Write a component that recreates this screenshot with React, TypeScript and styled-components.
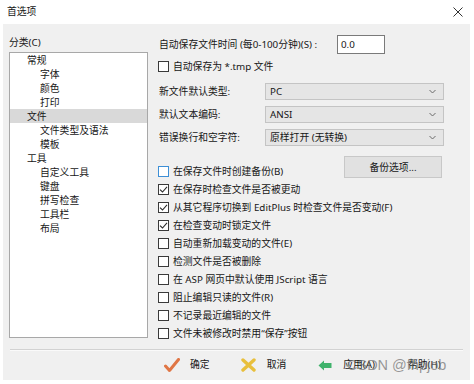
import React from "react"
import styled, { createGlobalStyle } from "styled-components"

const GlobalStyle = createGlobalStyle`
  html, body {
    margin: 0;
    padding: 0;
    background: #fff;
  }
  body {
    font-family: "Noto Sans", "Noto Sans CJK SC", sans-serif;
    font-size: 9.8px;
    color: #161616;
  }
`

const Window = styled.div`
  width: 474px;
  height: 384px;
  display: flex;
  flex-direction: column;
  background: #fff;
`

const TitleBar = styled.div`
  height: 24px;
  display: flex;
  align-items: center;
  justify-content: space-between;
  padding: 0 11px 0 7px;
  box-sizing: border-box;
`

const Title = styled.span`
  line-height: 14px;
`

const Body = styled.div`
  margin: 0 4px 0 3px;
  height: 356px;
  background: #f0f0f0;
  display: flex;
  flex-direction: column;
`

const Main = styled.div`
  height: 324px;
  display: flex;
  gap: 11px;
  padding-left: 6px;
`

const LeftCol = styled.div`
  width: 139px;
  padding-top: 12px;
  display: flex;
  flex-direction: column;
`

const Label = styled.div<{ $w?: number }>`
  line-height: 14px;
  white-space: nowrap;
  ${(p) => (p.$w ? `width: ${p.$w}px; flex-shrink: 0;` : "")}
`

const TreeBox = styled.div`
  margin-top: 2px;
  height: 286px;
  border: 1px solid #a8a8a8;
  background: #fff;
  box-sizing: border-box;
`

const TreeItem = styled.div<{ $level: number; $selected?: boolean }>`
  height: 14px;
  line-height: 15px;
  padding-left: ${(p) => 17 + p.$level * 13}px;
  background: ${(p) => (p.$selected ? "#d9d9d9" : "transparent")};
`

const RightCol = styled.div`
  width: 285px;
  padding-top: 11px;
  display: flex;
  flex-direction: column;
`

const Row = styled.div<{ $mt?: number }>`
  display: flex;
  align-items: center;
  margin-top: ${(p) => p.$mt ?? 0}px;
`

const TextInput = styled.div`
  width: 48px;
  height: 19px;
  box-sizing: border-box;
  border: 1px solid #7a7a7a;
  background: #fff;
  padding-left: 3px;
  line-height: 17px;
`

const Select = styled.div`
  width: 179px;
  height: 17px;
  box-sizing: border-box;
  border: 1px solid #c4c4c4;
  background: #e5e5e5;
  display: flex;
  align-items: center;
  justify-content: space-between;
  padding: 0 7px 0 4px;
  line-height: 15px;
`

const CheckRow = styled.div`
  height: 18px;
  display: flex;
  align-items: center;
  gap: 4px;
  margin-left: -1px;
  white-space: nowrap;
`

const Box = styled.span<{ $focus?: boolean }>`
  width: 11px;
  height: 11px;
  box-sizing: border-box;
  border: 1px solid ${(p) => (p.$focus ? "#3d8fd6" : "#3a3a3a")};
  background: #fff;
  display: inline-flex;
  align-items: center;
  justify-content: center;
  flex-shrink: 0;
`

const ButtonRow = styled.div`
  display: flex;
  align-items: flex-end;
  justify-content: space-between;
  margin-top: 10px;
`

const PushButton = styled.div`
  width: 98px;
  height: 22px;
  box-sizing: border-box;
  border: 1px solid #c8c8c8;
  background: #e1e1e1;
  display: flex;
  align-items: center;
  justify-content: center;
  margin: 0 2px 2px 0;
`

const Separator = styled.div`
  height: 1px;
  margin: 1px 7px 0 7px;
  background: #d2d2d2;
  box-shadow: 0 1px 0 #fafafa;
`

const Footer = styled.div`
  position: relative;
  flex: 1;
  display: flex;
  align-items: center;
  padding-left: 160px;
`

const FooterButton = styled.div<{ $indent?: number }>`
  width: 79px;
  display: flex;
  align-items: center;
  gap: 10px;
  line-height: 14px;
  padding-left: ${(p) => p.$indent ?? 0}px;
  box-sizing: border-box;
`

const IconSlot = styled.span`
  width: 17px;
  height: 16px;
  display: inline-flex;
  align-items: center;
  justify-content: center;
`

const Watermark = styled.div`
  position: absolute;
  left: 344px;
  top: 7px;
  font-family: "Liberation Sans", sans-serif;
  font-size: 14.5px;
  line-height: 16px;
  color: rgba(110, 110, 110, 0.7);
  pointer-events: none;
`

const tree = [
  { label: "常规", level: 0 },
  { label: "字体", level: 1 },
  { label: "颜色", level: 1 },
  { label: "打印", level: 1 },
  { label: "文件", level: 0, selected: true },
  { label: "文件类型及语法", level: 1 },
  { label: "模板", level: 1 },
  { label: "工具", level: 0 },
  { label: "自定义工具", level: 1 },
  { label: "键盘", level: 1 },
  { label: "拼写检查", level: 1 },
  { label: "工具栏", level: 1 },
  { label: "布局", level: 1 },
]

const checks = [
  { label: "在保存时检查文件是否被更动", on: true },
  { label: "从其它程序切换到 EditPlus 时检查文件是否变动(F)", on: true },
  { label: "在检查变动时锁定文件", on: true },
  { label: "自动重新加载变动的文件(E)", on: false },
  { label: "检测文件是否被删除", on: false },
  { label: "在 ASP 网页中默认使用 JScript 语言", on: false },
  { label: "阻止编辑只读的文件(R)", on: false },
  { label: "不记录最近编辑的文件", on: false },
  { label: "文件未被修改时禁用“保存”按钮", on: false },
]

const Tick = () => (
  <svg width="9" height="9" viewBox="0 0 9 9">
    <path d="M1 4.6 L3.5 7 L8 1.8" fill="none" stroke="#2b2b2b" strokeWidth="1.1" />
  </svg>
)

const Chevron = () => (
  <svg width="7" height="5" viewBox="0 0 7 5">
    <path d="M0.5 1 L3.5 4 L6.5 1" fill="none" stroke="#6a6a6a" strokeWidth="1" />
  </svg>
)

const Check = ({ on, focus, label }: { on?: boolean; focus?: boolean; label: string }) => (
  <CheckRow>
    <Box $focus={focus}>{on && <Tick />}</Box>
    <span>{label}</span>
  </CheckRow>
)

const SelectRow = ({ label, value, mt }: { label: string; value: string; mt: number }) => (
  <Row $mt={mt}>
    <Label $w={106}>{label}</Label>
    <Select>
      <span>{value}</span>
      <Chevron />
    </Select>
  </Row>
)

export default function App() {
  return (
    <>
      <GlobalStyle />
      <Window>
        <TitleBar>
          <Title>首选项</Title>
          <svg width="10" height="10" viewBox="0 0 10 10">
            <path d="M0.5 0.5 L9.5 9.5 M9.5 0.5 L0.5 9.5" stroke="#333" strokeWidth="1" />
          </svg>
        </TitleBar>
        <Body>
          <Main>
            <LeftCol>
              <Label>分类(C)</Label>
              <TreeBox>
                {tree.map((t) => (
                  <TreeItem key={t.label} $level={t.level} $selected={t.selected}>
                    {t.label}
                  </TreeItem>
                ))}
              </TreeBox>
            </LeftCol>
            <RightCol>
              <Row>
                <Label $w={178}>自动保存文件时间 (每0-100分钟)(S) :</Label>
                <TextInput>0.0</TextInput>
              </Row>
              <Row $mt={3}>
                <Check label="自动保存为 *.tmp 文件" />
              </Row>
              <SelectRow label="新文件默认类型:" value="PC" mt={8} />
              <SelectRow label="默认文本编码:" value="ANSI" mt={6} />
              <SelectRow label="错误换行和空字符:" value="原样打开 (无转换)" mt={6} />
              <ButtonRow>
                <Check focus label="在保存文件时创建备份(B)" />
                <PushButton>备份选项...</PushButton>
              </ButtonRow>
              {checks.map((c) => (
                <Check key={c.label} on={c.on} label={c.label} />
              ))}
            </RightCol>
          </Main>
          <Separator />
          <Footer>
            <FooterButton>
              <IconSlot>
                <svg width="16" height="15" viewBox="0 0 16 15">
                  <path d="M1.5 8 L5.5 12.5 L14.5 1.5" fill="none" stroke="#e07645" strokeWidth="3" strokeLinecap="round" strokeLinejoin="round" />
                </svg>
              </IconSlot>
              <span>确定</span>
            </FooterButton>
            <FooterButton>
              <IconSlot>
                <svg width="15" height="14" viewBox="0 0 15 14">
                  <path d="M2 2 L13 12 M13 2 L2 12" stroke="#e8bf3c" strokeWidth="3.4" strokeLinecap="round" />
                </svg>
              </IconSlot>
              <span>取消</span>
            </FooterButton>
            <FooterButton>
              <IconSlot>
                <svg width="14" height="11" viewBox="0 0 14 11">
                  <path d="M0.5 5.5 L6 0.5 L6 3 L13.5 3 L13.5 8 L6 8 L6 10.5 Z" fill="#3fb26b" />
                </svg>
              </IconSlot>
              <span>应用(A)</span>
            </FooterButton>
            <FooterButton $indent={15}>
              <span>帮助(H)</span>
            </FooterButton>
            <Watermark>CSDN @fhpjob</Watermark>
          </Footer>
        </Body>
      </Window>
    </>
  )
}
